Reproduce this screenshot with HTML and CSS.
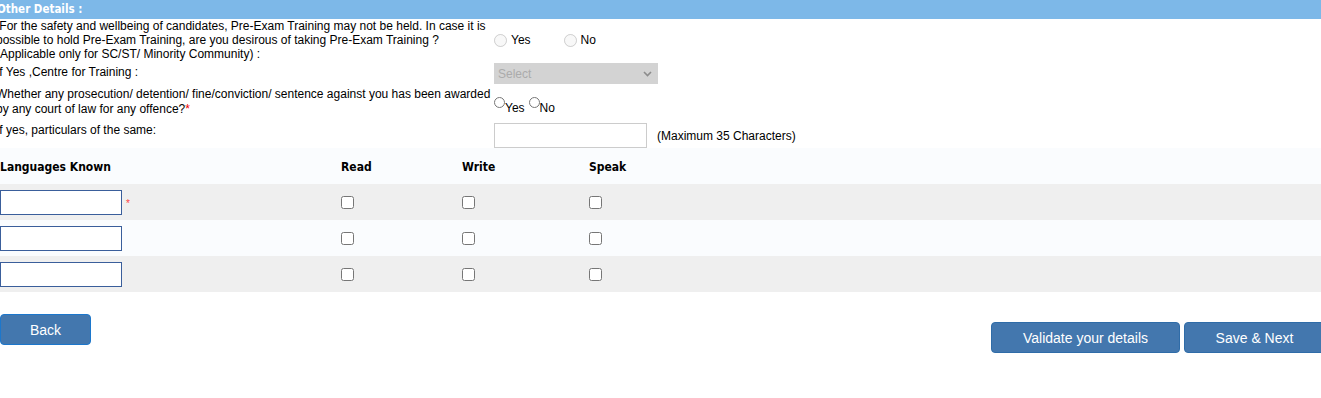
FILE: index.html
```html
<!DOCTYPE html>
<html>
<head>
    <meta charset="UTF-8">
    <title>Other Details</title>
    <link rel="stylesheet" href="styles.css">
</head>
<body>
    <div class="section-head">Other Details :</div>

    <div class="form-row row-training">
        <label class="field-label">&nbsp;For the safety and wellbeing of candidates, Pre-Exam Training may not be held. In case it is possible to hold Pre-Exam Training, are you desirous of taking Pre-Exam Training ? (Applicable only for SC/ST/ Minority Community) :</label>
        <div class="field-control radio-group">
            <label class="radio-item"><input type="radio" name="training" disabled> Yes</label>
            <label class="radio-item"><input type="radio" name="training" disabled> No</label>
        </div>
    </div>

    <div class="form-row row-centre">
        <label class="field-label">If Yes ,Centre for Training :</label>
        <div class="field-control">
            <div class="select-wrap">
                <select class="select-box" disabled>
                    <option>Select</option>
                </select>
                <svg class="select-arrow" width="9" height="6" viewBox="0 0 9 6">
                    <path d="M1 1 L4.5 4.5 L8 1" fill="none" stroke="#8c8c8c" stroke-width="1.6"/>
                </svg>
            </div>
        </div>
    </div>

    <div class="form-row row-offence">
        <label class="field-label">Whether any prosecution/ detention/ fine/conviction/ sentence against you has been awarded by any court of law for any offence?<span class="req">*</span></label>
        <div class="field-control small-radios">
            <input type="radio" name="offence" class="mini-radio"><span class="mini-label">Yes</span>
            <input type="radio" name="offence" class="mini-radio"><span class="mini-label">No</span>
        </div>
    </div>

    <div class="form-row row-particulars">
        <label class="field-label">If yes, particulars of the same:</label>
        <div class="field-control">
            <input type="text" class="text-box" maxlength="35">
            <span class="hint">(Maximum 35 Characters)</span>
        </div>
    </div>

    <div class="lang-table">
        <div class="lang-row lang-head">
            <div>Languages Known</div>
            <div>Read</div>
            <div>Write</div>
            <div>Speak</div>
        </div>
        <div class="lang-row odd">
            <div class="lang-name"><input type="text" class="lang-input"><span class="lang-req">*</span></div>
            <div><input type="checkbox"></div>
            <div><input type="checkbox"></div>
            <div><input type="checkbox"></div>
        </div>
        <div class="lang-row">
            <div class="lang-name"><input type="text" class="lang-input"></div>
            <div><input type="checkbox"></div>
            <div><input type="checkbox"></div>
            <div><input type="checkbox"></div>
        </div>
        <div class="lang-row odd">
            <div class="lang-name"><input type="text" class="lang-input"></div>
            <div><input type="checkbox"></div>
            <div><input type="checkbox"></div>
            <div><input type="checkbox"></div>
        </div>
    </div>

    <div class="actions">
        <button class="btn btn-back">Back</button>
        <div class="actions-right">
            <button class="btn btn-validate">Validate your details</button>
            <button class="btn btn-save">Save &amp; Next</button>
        </div>
    </div>
</body>
</html>
```

FILE: styles.css
```css
* {
    box-sizing: border-box;
}

body {
    margin: 0;
    font-family: 'Liberation Sans', Arial, sans-serif;
    font-size: 12px;
    color: #000;
    background: #fff;
    overflow: hidden;
}

.section-head {
    height: 19px;
    line-height: 19px;
    background: #7db8e8;
    color: #fff;
    font-family: 'DejaVu Sans Condensed', 'DejaVu Sans', Tahoma, sans-serif;
    font-weight: bold;
    font-size: 11.5px;
    margin-left: -3px;
}

/* form rows */
.form-row {
    display: grid;
    grid-template-columns: 498px 1fr;
    margin-left: -4px;
}

.field-label {
    line-height: 14px;
}

.row-training .field-control {
    align-self: center;
}

.radio-group {
    display: flex;
    gap: 33px;
}

.radio-item {
    display: flex;
    align-items: center;
    gap: 4px;
}

.radio-item input {
    width: 13px;
    height: 13px;
    margin: 0;
}

.row-centre {
    padding: 2px 0;
}

.row-centre .field-label {
    padding-top: 2px;
}

.select-wrap {
    display: grid;
    width: 164px;
    height: 21px;
    align-items: center;
}

.select-box,
.select-arrow {
    grid-area: 1 / 1;
}

.select-box {
    appearance: none;
    -webkit-appearance: none;
    width: 164px;
    height: 21px;
    border: none;
    background: #d3d3d3;
    color: #ababab;
    font-family: 'Liberation Sans', Arial, sans-serif;
    font-size: 12px;
    padding: 0 4px;
    opacity: 1;
}

.select-arrow {
    justify-self: end;
    margin-right: 6px;
    pointer-events: none;
}

.row-offence {
    padding-bottom: 4px;
}

.row-offence .field-label {
    line-height: 15px;
    padding-top: 1px;
}

.req {
    color: #e00;
}

.small-radios {
    display: flex;
    align-items: flex-start;
    padding-top: 11px;
}

.mini-radio {
    width: 11px;
    height: 11px;
    margin: 0;
}

.mini-label {
    padding-top: 4px;
    line-height: 14px;
    margin-right: 4px;
}

.row-particulars .field-label {
    padding-top: 2px;
}

.row-particulars .field-control {
    display: flex;
    align-items: center;
    padding-top: 2px;
}

.text-box {
    width: 153px;
    height: 25px;
    border: 1px solid #ccc;
    margin: 0;
}

.hint {
    margin-left: 10px;
}

/* languages table */
.lang-row {
    display: grid;
    grid-template-columns: 341px 121px 127px 1fr;
    height: 36px;
    align-items: center;
    background: #fafcfe;
}

.lang-row.odd {
    background: #efefef;
}

.lang-head {
    font-family: 'DejaVu Sans Condensed', 'DejaVu Sans', Tahoma, sans-serif;
    font-weight: bold;
    font-size: 12px;
    padding-top: 2px;
}

.lang-name {
    display: flex;
    align-items: center;
}

.lang-input {
    width: 122px;
    height: 25px;
    border: 1px solid #3a5e9b;
    margin: 0;
}

.lang-req {
    color: #ff4444;
    font-size: 10px;
    margin-left: 4px;
    padding-top: 2px;
}

.lang-row input[type="checkbox"] {
    width: 13px;
    height: 13px;
    margin: 0;
    display: block;
}

/* buttons */
.actions {
    display: flex;
    justify-content: space-between;
    align-items: flex-start;
    margin-top: 22px;
    margin-right: -4px;
}

.actions-right {
    display: flex;
    gap: 4px;
    margin-top: 8px;
}

.btn {
    height: 31px;
    background: #4377ae;
    border: 1px solid #2f6ca8;
    border-radius: 4px;
    color: #fff;
    font-family: 'Liberation Sans', Arial, sans-serif;
    font-size: 14px;
    padding: 0;
}

.btn-back {
    width: 91px;
    border-color: #1c77cc;
}

.btn-validate {
    width: 189px;
}

.btn-save {
    width: 141px;
}
```
